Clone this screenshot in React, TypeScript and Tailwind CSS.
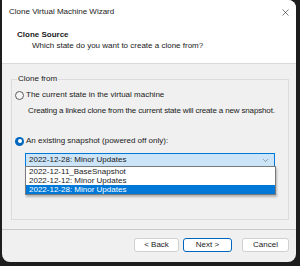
import { X, ChevronDown } from 'lucide-react'

const SNAPSHOTS = ['2022-12-11_BaseSnapshot', '2022-12-12: Minor Updates', '2022-12-28: Minor Updates']

function Radio({ checked }: { checked?: boolean }) {
  return checked ? (
    <span className="w-[9px] h-[9px] rounded-full bg-[#0067c0] flex items-center justify-center shrink-0">
      <span className="w-[4px] h-[4px] rounded-full bg-white" />
    </span>
  ) : (
    <span className="w-[9px] h-[9px] rounded-full border border-[#5c5c5c] bg-[#f6f6f6] shrink-0" />
  )
}

export default function App() {
  const selected = 2
  return (
    <div
      className="w-[300px] h-[266px] bg-[#1e1e1e] pl-[2px] pr-[4px] pb-[4px] overflow-hidden text-[8px] leading-[10px] text-[#1a1a1a]"
      style={{ fontFamily: '"Liberation Sans", Arial, sans-serif' }}
    >
      <div className="h-full bg-[#f0f0f0] rounded-tr-[8px] rounded-b-[8px] flex flex-col overflow-hidden">
        {/* Title + header */}
        <div className="h-[64px] bg-white border-b border-[#d9d9d9]">
          <div className="h-[24px] flex items-center justify-between pl-[7px] pr-[5px]">
            <span>Clone Virtual Machine Wizard</span>
            <X size={11} strokeWidth={1.3} className="text-[#222]" />
          </div>
          <div className="pl-[15px] pt-[6px]">
            <div className="font-bold">Clone Source</div>
            <div className="pl-[15px] mt-[1px]">Which state do you want to create a clone from?</div>
          </div>
        </div>

        {/* Body */}
        <div className="flex-1 pl-[9px] pr-[8px] pt-[10px] pb-[9px]">
          <fieldset className="h-full border border-[#dcdcdc] pl-[3px] pr-[13px] relative">
            <legend className="ml-[2px] px-[1px]">Clone from</legend>
            <div className="flex items-center gap-[2px] mt-[6px]">
              <Radio />
              <span>The current state in the virtual machine</span>
            </div>
            <div className="pl-[13px] mt-[6px] whitespace-nowrap tracking-[-0.15px]">
              Creating a linked clone from the current state will create a new snapshot.
            </div>
            <div className="flex items-center gap-[2px] mt-[20px]">
              <Radio checked />
              <span>An existing snapshot (powered off only):</span>
            </div>
            <div className="relative ml-[10px] mt-[7px]">
              <div className="h-[14px] bg-[#cce4f7] border border-[#0078d7] flex items-center justify-between pl-[3px] pr-[4px]">
                <span>{SNAPSHOTS[selected]}</span>
                <ChevronDown size={9} strokeWidth={1.4} className="text-[#555]" />
              </div>
              <div className="absolute left-0 right-[-1px] top-[13px] bg-white border border-[#7a7a7a] shadow-[1px_2px_2px_rgba(0,0,0,0.25)]">
                {SNAPSHOTS.map((s, i) => (
                  <div
                    key={s}
                    className={`h-[9px] leading-[9px] pl-[3px] ${i === selected ? 'bg-[#0078d7] text-white' : ''}`}
                  >
                    {s}
                  </div>
                ))}
              </div>
            </div>
          </fieldset>
        </div>

        {/* Footer */}
        <div className="h-[33px] border-t border-[#c8c8c8] flex items-center justify-end pr-[7px] pb-[2px]">
          <button className="w-[45px] h-[14px] bg-white border border-[#d0d0d0] rounded-[3px] text-[8px] leading-[12px]">
            &lt; Back
          </button>
          <button className="w-[49px] h-[14px] ml-[4px] bg-white border border-[#0067c0] rounded-[3px] text-[8px] leading-[12px]">
            Next &gt;
          </button>
          <button className="w-[47px] h-[14px] ml-[10px] bg-white border border-[#d0d0d0] rounded-[3px] text-[8px] leading-[12px]">
            Cancel
          </button>
        </div>
      </div>
    </div>
  )
}
